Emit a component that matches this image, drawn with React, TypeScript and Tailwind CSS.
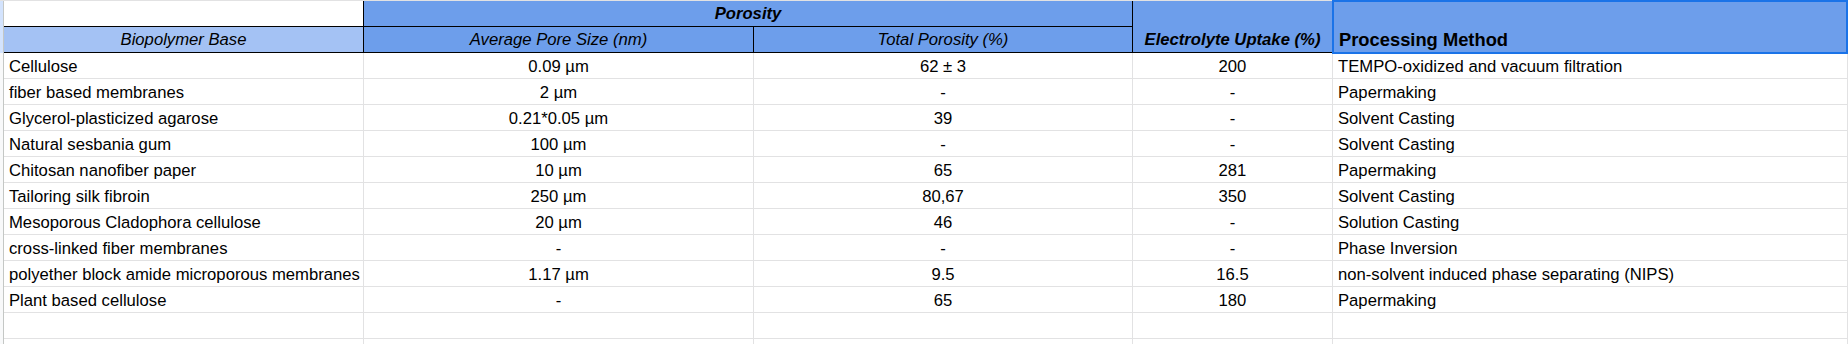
const rows: string[][] = [
  ["Cellulose", "0.09 µm", "62 ± 3", "200", "TEMPO-oxidized and vacuum filtration"],
  ["fiber based membranes", "2 µm", "-", "-", "Papermaking"],
  ["Glycerol-plasticized agarose", "0.21*0.05 µm", "39", "-", "Solvent Casting"],
  ["Natural sesbania gum", "100 µm", "-", "-", "Solvent Casting"],
  ["Chitosan nanofiber paper", "10 µm", "65", "281", "Papermaking"],
  ["Tailoring silk fibroin", "250 µm", "80,67", "350", "Solvent Casting"],
  ["Mesoporous Cladophora cellulose", "20 µm", "46", "-", "Solution Casting"],
  ["cross-linked fiber membranes", "-", "-", "-", "Phase Inversion"],
  ["polyether block amide microporous membranes", "1.17 µm", "9.5", "16.5", "non-solvent induced phase separating (NIPS)"],
  ["Plant based cellulose", "-", "65", "180", "Papermaking"],
  ["", "", "", "", ""],
  ["", "", "", "", ""],
];

const cell = "flex items-end pb-[1px] px-[5px] border-b border-r border-[#e2e2e3] whitespace-nowrap overflow-hidden";

export default function App() {
  return (
    <div
      className="w-[1848px] h-[344px] overflow-hidden bg-white text-black text-[16.67px] leading-[20px]"
      style={{ fontFamily: '"Liberation Sans", Arial, sans-serif' }}
    >
      <div className="grid grid-cols-[4px_360px_390px_379px_200px_1fr] auto-rows-[26px] border-t border-[#e2e2e3]">
        {/* header row 1 */}
        <div className="row-span-2 bg-[#d3e3fd] border-r border-[#c4c7c5]" />
        <div className="bg-white border-b border-r border-black" />
        <div className="col-span-2 bg-[#6d9eeb] border-b border-r border-black flex items-end justify-center pb-[2px] font-bold italic">
          Porosity
        </div>
        <div className="row-span-2 bg-[#6d9eeb] border-b border-r border-black flex items-end justify-center pb-[2px] font-bold italic">
          Electrolyte Uptake (%)
        </div>
        <div className="relative row-span-2 bg-[#6d9eeb] flex items-end px-[6px] pb-[3px] font-bold text-[18.33px]">
          Processing Method
          <div className="absolute -left-px -top-px right-0 -bottom-px border-2 border-[#1a73e8]" />
        </div>

        {/* header row 2 */}
        <div className="bg-[#a4c2f4] border-b border-r border-black flex items-end justify-center pb-[2px] italic">
          Biopolymer Base
        </div>
        <div className="bg-[#6d9eeb] border-b border-r border-black flex items-end justify-center pb-[2px] italic">
          Average Pore Size (nm)
        </div>
        <div className="bg-[#6d9eeb] border-b border-r border-black flex items-end justify-center pb-[2px] italic">
          Total Porosity (%)
        </div>

        {/* data */}
        {rows.map((r, i) => (
          <div key={i} className="contents">
            <div className="bg-[#f8f9fa] border-r border-[#c4c7c5]" />
            <div className={cell}>{r[0]}</div>
            <div className={`${cell} justify-center`}>{r[1]}</div>
            <div className={`${cell} justify-center`}>{r[2]}</div>
            <div className={`${cell} justify-center`}>{r[3]}</div>
            <div className={cell}>{r[4]}</div>
          </div>
        ))}
      </div>
    </div>
  );
}
